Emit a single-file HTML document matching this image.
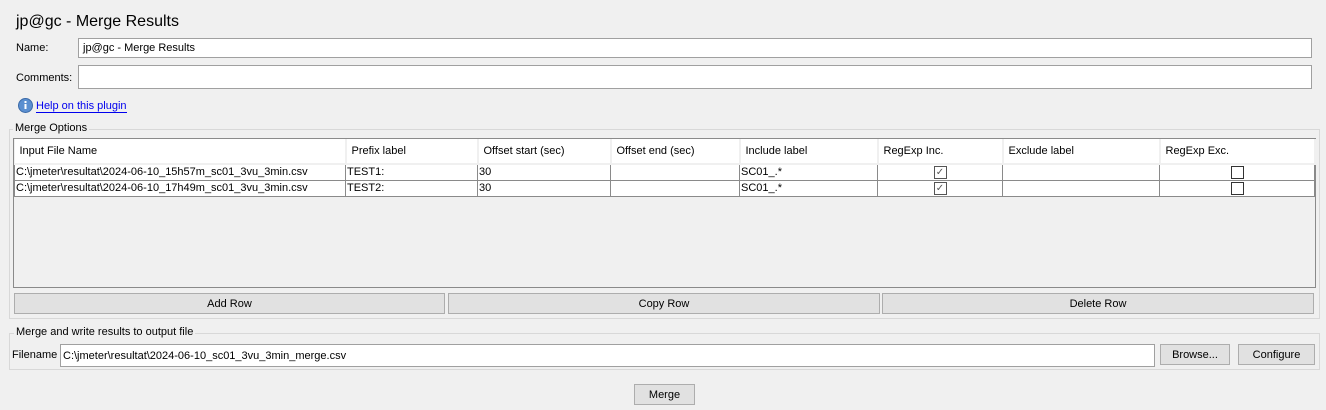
<!DOCTYPE html>
<html><head><style>
*{box-sizing:border-box;margin:0;padding:0}
body{width:1326px;height:410px;background:#f0f0f0;font-family:"Liberation Sans",sans-serif;font-size:11px;color:#000;position:relative;overflow:hidden}
.a{position:absolute}
.in{position:absolute;background:#fff;border:1px solid #a0a0a0;padding-left:4px;display:flex;align-items:center}
.btn{position:absolute;background:#e1e1e1;border:1px solid #adadad;display:flex;align-items:center;justify-content:center}
.fs{position:absolute;border:1px solid #d8d8d8}
.lg{position:absolute;background:#f0f0f0;padding:0 2px}
table{border-collapse:collapse;table-layout:fixed}
td{border:1px solid #8a8a8a;height:16px;padding:0 1px;white-space:nowrap;overflow:hidden;background:#fff}
th{font-weight:normal;text-align:left;height:25px;padding-left:5px;border-right:2px solid #f0f0f0;border-bottom:2px solid #f0f0f0;background:#fff}
.cb{display:inline-block;width:13px;height:13px;border:1px solid #333;vertical-align:middle;position:relative;background:#fff}
.c{text-align:center}
</style></head><body>
<div class="a" style="left:16px;top:13px;font-size:16px">jp@gc - Merge Results</div>
<div class="a" style="left:16px;top:42px">Name:</div>
<div class="in" style="left:78px;top:38px;width:1234px;height:20px">jp@gc - Merge Results</div>
<div class="a" style="left:16px;top:72px">Comments:</div>
<div class="in" style="left:78px;top:65px;width:1234px;height:24px"></div>
<svg class="a" style="left:18px;top:98px" width="15" height="15"><circle cx="7.5" cy="7.5" r="7" fill="#5b8fd0" stroke="#3a6aa8"/><rect x="6.5" y="6" width="2" height="5" fill="#fff"/><rect x="6.5" y="3" width="2" height="2" fill="#fff"/></svg>
<div class="a" style="left:36px;top:100px;color:#00e;border-bottom:1px solid #00e;line-height:12px">Help on this plugin</div>
<div class="fs" style="left:9px;top:129px;width:1311px;height:190px"></div>
<div class="lg" style="left:13px;top:122px">Merge Options</div>
<div class="a" style="left:13px;top:138px;width:1303px;height:150px;border:1px solid #8a8a8a;background:#f0f0f0">
<table style="width:1300px">
<colgroup><col style="width:331px"><col style="width:132px"><col style="width:133px"><col style="width:129px"><col style="width:138px"><col style="width:125px"><col style="width:157px"><col style="width:155px"></colgroup>
<tr><th>Input File Name</th><th>Prefix label</th><th>Offset start (sec)</th><th>Offset end (sec)</th><th>Include label</th><th>RegExp Inc.</th><th>Exclude label</th><th>RegExp Exc.</th></tr>
<tr><td>C:\jmeter\resultat\2024-06-10_15h57m_sc01_3vu_3min.csv</td><td>TEST1:</td><td>30</td><td></td><td>SC01_.*</td><td class="c"><span class="cb" style="border-color:#555;color:#555;font-size:10px;line-height:11px">✓</span></td><td></td><td class="c"><span class="cb"></span></td></tr>
<tr><td>C:\jmeter\resultat\2024-06-10_17h49m_sc01_3vu_3min.csv</td><td>TEST2:</td><td>30</td><td></td><td>SC01_.*</td><td class="c"><span class="cb" style="border-color:#555;color:#555;font-size:10px;line-height:11px">✓</span></td><td></td><td class="c"><span class="cb"></span></td></tr>
</table></div>
<div class="btn" style="left:14px;top:293px;width:431px;height:21px">Add Row</div>
<div class="btn" style="left:448px;top:293px;width:432px;height:21px">Copy Row</div>
<div class="btn" style="left:882px;top:293px;width:432px;height:21px">Delete Row</div>
<div class="fs" style="left:9px;top:333px;width:1311px;height:37px"></div>
<div class="lg" style="left:14px;top:326px">Merge and write results to output file</div>
<div class="a" style="left:12px;top:349px">Filename</div>
<div class="in" style="left:60px;top:344px;width:1095px;height:23px;padding-left:2px">C:\jmeter\resultat\2024-06-10_sc01_3vu_3min_merge.csv</div>
<div class="btn" style="left:1160px;top:344px;width:70px;height:21px">Browse...</div>
<div class="btn" style="left:1238px;top:344px;width:77px;height:21px">Configure</div>
<div class="btn" style="left:634px;top:384px;width:61px;height:21px">Merge</div>
</body></html>
